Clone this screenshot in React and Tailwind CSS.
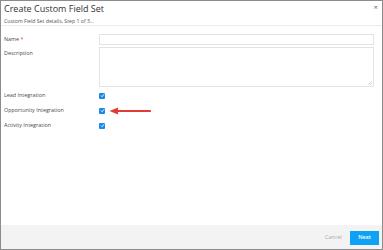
import React from "react";

const font = { fontFamily: '"Open Sans", "Noto Sans", sans-serif' };

const Check = () => (
  <span className="flex h-[6px] w-[6px] items-center justify-center rounded-[1px] bg-[#1a8ae8]">
    <svg width="5" height="5" viewBox="0 0 10 10">
      <path d="M2 5.2 L4.2 7.4 L8.2 2.6" fill="none" stroke="white" strokeWidth="1.8" />
    </svg>
  </span>
);

const Arrow = () => (
  <svg width="42" height="8" viewBox="0 0 42 8" className="ml-[4px]">
    <path d="M8 4 H41" stroke="#e53935" strokeWidth="2.2" strokeLinecap="round" />
    <path d="M0.5 4 L9 0.5 L9 7.5 Z" fill="#e53935" />
  </svg>
);

export default function App() {
  const rows = [
    { label: "Lead Integration" },
    { label: "Opportunity Integration", arrow: true },
    { label: "Activity Integration" },
  ];

  return (
    <div
      className="flex h-[250px] w-[383px] flex-col border border-[#8c8c8c] bg-white text-[#4a4a4a]"
      style={font}
    >
      {/* header */}
      <div className="relative h-[25px] border-b border-[#ececec] px-[3px] pt-[2px]">
        <h1 className="text-[9px] leading-[12px] text-[#333]">Create Custom Field Set</h1>
        <p className="mt-[3px] text-[5.2px] leading-[7px] text-[#555]">
          Custom Field Set details, Step 1 of 3...
        </p>
        <span className="absolute right-[4px] top-[2px] text-[8px] leading-[8px] text-[#666]">×</span>
      </div>

      {/* body */}
      <div className="flex-1 pl-[3px] pr-[8px] pt-[8px] text-[5.4px]">
        <div className="flex h-[11px] items-center">
          <span className="w-[95px]">
            Name <span className="text-[#e53935]">*</span>
          </span>
          <div className="h-[11px] flex-1 border border-[#e3e3e3]" />
        </div>
        <div className="mt-[2px] flex">
          <span className="w-[95px] pt-[2px]">Description</span>
          <div className="relative h-[40px] flex-1 border border-[#e3e3e3]">
            <svg width="4" height="4" viewBox="0 0 4 4" className="absolute bottom-[1px] right-[1px]">
              <path d="M0 4 L4 0 M2 4 L4 2" stroke="#bbb" strokeWidth="0.6" />
            </svg>
          </div>
        </div>
        <div className="mt-[1px] flex flex-col">
          {rows.map((r) => (
            <div key={r.label} className="flex h-[15px] items-center">
              <span className="w-[95px]">{r.label}</span>
              <Check />
              {r.arrow && <Arrow />}
            </div>
          ))}
        </div>
      </div>

      {/* footer */}
      <div className="flex h-[24px] items-center justify-end gap-[8px] bg-[#f3f3f3] pr-[3px] pt-[1px]">
        <span className="text-[5.5px] text-[#aaa]">Cancel</span>
        <button className="h-[14px] w-[29px] bg-[#0ea2f5] text-[5.5px] font-semibold text-white">
          Next
        </button>
      </div>
    </div>
  );
}
